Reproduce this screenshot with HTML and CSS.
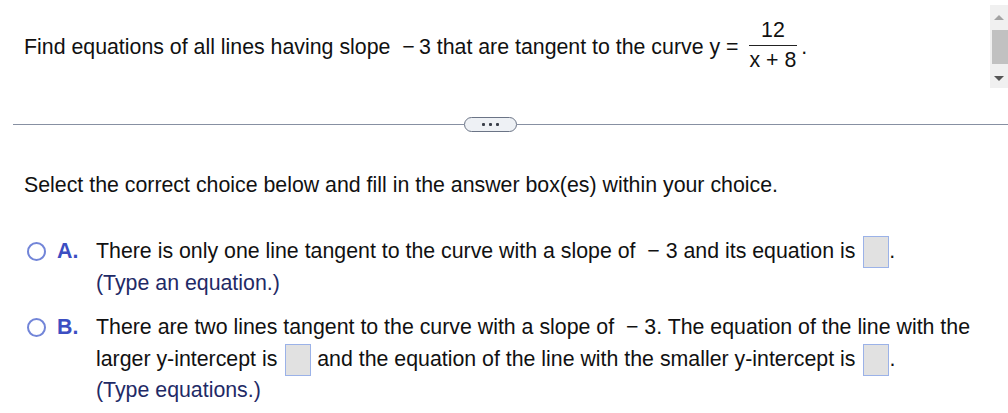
FILE: index.html
```html
<!DOCTYPE html>
<html>
<head>
<meta charset="utf-8">
<link rel="stylesheet" href="styles.css">
</head>
<body>
<div class="page">
  <div class="question">
    <span class="qtext">Find equations of all lines having slope &nbsp;&minus;&thinsp;3 that are tangent to the curve y =</span>
    <span class="frac"><span class="num">12</span><span class="den">x + 8</span></span><span class="qtext dot">.</span>
  </div>

  <div class="sep">
    <div class="sep-line left"></div>
    <div class="pill"><span></span><span></span><span></span></div>
    <div class="sep-line right"></div>
  </div>

  <p class="prompt">Select the correct choice below and fill in the answer box(es) within your choice.</p>

  <div class="options">
    <div class="option">
      <span class="radio"></span>
      <span class="label">A.</span>
      <div class="body">
        <div>There is only one line tangent to the curve with a slope of &nbsp;&minus;&nbsp;3 and its equation is <span class="box"></span>.</div>
        <div class="hint">(Type an equation.)</div>
      </div>
    </div>
    <div class="option">
      <span class="radio"></span>
      <span class="label">B.</span>
      <div class="body">
        <div>There are two lines tangent to the curve with a slope of &nbsp;&minus;&nbsp;3. The equation of the line with the larger y-intercept is <span class="box"></span> and the equation of the line with the smaller y-intercept is <span class="box"></span>.</div>
        <div class="hint">(Type equations.)</div>
      </div>
    </div>
  </div>
</div>

<div class="scrollbar">
  <div class="arrow up"></div>
  <div class="thumb"></div>
  <div class="arrow down"></div>
</div>
</body>
</html>
```

FILE: styles.css
```css
html, body {
  margin: 0;
  padding: 0;
  background: #fff;
}
body {
  font-family: "Liberation Sans", Arial, sans-serif;
  font-size: 21.33px;
  color: #111;
  width: 1008px;
  height: 413px;
  overflow: hidden;
  position: relative;
}
.page {
  padding-top: 19px;
}
.question {
  display: flex;
  align-items: flex-start;
  padding-left: 24px;
}
.qtext {
  line-height: 24px;
  margin-top: 16px;
  white-space: nowrap;
}
.frac {
  display: inline-flex;
  flex-direction: column;
  align-items: center;
  margin-left: 9px;
}
.frac .num {
  padding: 0 12px 4px;
  line-height: 22px;
  border-bottom: 1px solid #222;
}
.frac .den {
  padding: 3px 2px 0;
  line-height: 22px;
}
.dot {
  margin-left: 3px;
}
.sep {
  display: flex;
  align-items: center;
  margin-top: 46px;
  height: 15px;
}
.sep-line {
  height: 1px;
  background: #8790a2;
}
.sep-line.left {
  margin-left: 13px;
  width: 451px;
}
.sep-line.right {
  flex: 1;
}
.pill {
  width: 51px;
  height: 13px;
  border: 1px solid #6b7486;
  border-radius: 8px;
  background: #eef1f5;
  display: flex;
  align-items: center;
  justify-content: center;
  gap: 4px;
}
.pill span {
  width: 3px;
  height: 3px;
  background: #3a3f4a;
  border-radius: 1px;
}
.prompt {
  margin: 41px 0 0 24px;
  line-height: 24px;
}
.options {
  margin-top: 39px;
  padding-left: 27px;
}
.option {
  display: flex;
  align-items: flex-start;
  margin-bottom: 13px;
}
.radio {
  flex: none;
  width: 15px;
  height: 15px;
  border: 2px solid #7285d8;
  border-radius: 50%;
  margin-top: 6px;
}
.label {
  flex: none;
  font-weight: bold;
  color: #3c4ec2;
  margin-left: 11px;
  width: 39px;
  line-height: 31.5px;
}
.body {
  line-height: 31.5px;
  width: 890px;
}
.hint {
  color: #1f2a66;
}
.box {
  display: inline-block;
  width: 24px;
  height: 30px;
  background: #e1e1e1;
  border: 1px solid #9bb2e8;
  vertical-align: middle;
  margin: -4px 0 -4px 2px;
}
.scrollbar {
  position: absolute;
  top: 5px;
  right: 0;
  width: 18px;
  height: 83px;
  background: #f0f0f0;
  display: flex;
  flex-direction: column;
  align-items: center;
}
.arrow {
  width: 0;
  height: 0;
  border-left: 5px solid transparent;
  border-right: 5px solid transparent;
}
.arrow.up {
  margin-top: 10px;
  border-bottom: 5px solid #a3a3a3;
}
.arrow.down {
  margin-top: 12px;
  border-top: 5px solid #555;
}
.thumb {
  margin-top: 10px;
  width: 16px;
  height: 34px;
  background: #c1c1c1;
  align-self: flex-end;
}
```
